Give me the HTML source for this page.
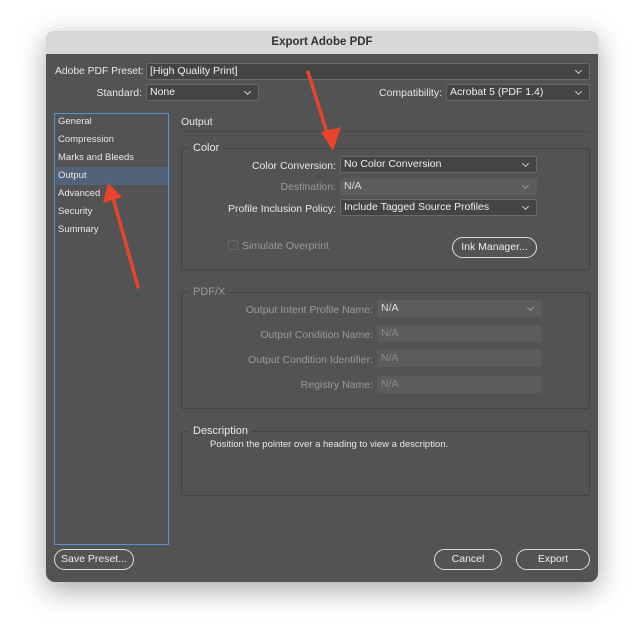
<!DOCTYPE html>
<html><head><meta charset="utf-8"><style>
*{box-sizing:border-box;margin:0;padding:0}
body{width:644px;height:643px;background:#fff;position:relative;overflow:hidden;font-family:"Liberation Sans",sans-serif;color:#e8e8e8}
.a{position:absolute}
#dlg{left:46px;top:31px;width:552px;height:551px;background:#535353;border-radius:9px;box-shadow:0 8px 28px rgba(0,0,0,.35);overflow:hidden}
#tb{left:0;top:0;width:552px;height:23px;background:#d7d7d7;color:#333;font-weight:bold;font-size:11.5px;text-align:center;line-height:23px}
.t{font-size:10.5px;white-space:nowrap;line-height:14px}
.r{text-align:right}
.sel{background:#444;border:1px solid #6a6a6a;border-radius:2px;font-size:10.5px;line-height:15px;padding-left:3px;color:#f0f0f0}
.sel:after{content:"";position:absolute;right:8px;top:4px;width:4px;height:4px;border-right:1px solid #ccc;border-bottom:1px solid #ccc;transform:rotate(45deg)}
.dis{background:#5c5c5c;border-color:#5c5c5c;color:#ddd}
.dis:after{border-color:#999}
.dis2{background:#5c5c5c;border-color:#5c5c5c;color:#8a8a8a}
.dis2:after{display:none}
.dim{color:#9a9a9a}
.box{border:1px solid #444;border-radius:2px}
.lg{background:#535353;padding:0 4px;font-size:11px;line-height:12px}
.btn{border:1px solid #ddd;border-radius:11px;font-size:10.5px;text-align:center;line-height:19px;color:#eee}
.li{left:1px;width:112px;height:18px;font-size:9.5px;line-height:18px;padding-left:2px}
</style></head><body>
<div id="dlg" class="a">
<div id="tb" class="a">Export Adobe PDF</div>
</div>
<div class="a t" style="left:55px;top:65px;font-size:10.3px">Adobe PDF Preset:</div>
<div class="a sel" style="left:146px;top:63px;width:444px;height:17px">[High Quality Print]</div>
<div class="a t r" style="left:60px;top:86px;width:82px">Standard:</div>
<div class="a sel" style="left:146px;top:84px;width:113px;height:17px">None</div>
<div class="a t r" style="left:340px;top:86px;width:102px">Compatibility:</div>
<div class="a sel" style="left:446px;top:84px;width:144px;height:17px">Acrobat 5 (PDF 1.4)</div>

<div class="a" style="left:54px;top:113px;width:115px;height:432px;border:1px solid #5b8fd3">
<div class="a li" style="top:-1px">General</div>
<div class="a li" style="top:17px">Compression</div>
<div class="a li" style="top:35px">Marks and Bleeds</div>
<div class="a li" style="top:53px;background:#526279">Output</div>
<div class="a li" style="top:71px">Advanced</div>
<div class="a li" style="top:89px">Security</div>
<div class="a li" style="top:107px">Summary</div>
</div>

<div class="a t" style="left:181px;top:115px">Output</div>
<div class="a" style="left:181px;top:131px;width:409px;height:1px;background:#474747"></div>

<div class="a box" style="left:181px;top:148px;width:409px;height:122px"></div>
<div class="a lg" style="left:189px;top:142px">Color</div>
<div class="a t r" style="left:200px;top:159px;width:136px">Color Conversion:</div>
<div class="a sel" style="left:340px;top:156px;width:197px;height:17px">No Color Conversion</div>
<div class="a t r dim" style="left:200px;top:180px;width:136px">Destination:</div>
<div class="a sel dis" style="left:340px;top:178px;width:197px;height:17px">N/A</div>
<div class="a t r" style="left:200px;top:202px;width:136px">Profile Inclusion Policy:</div>
<div class="a sel" style="left:340px;top:199px;width:197px;height:17px">Include Tagged Source Profiles</div>
<div class="a" style="left:228px;top:240px;width:10px;height:10px;border:1px solid #666;border-radius:2px"></div>
<div class="a t dim" style="left:242px;top:239px">Simulate Overprint</div>
<div class="a btn" style="left:452px;top:237px;width:85px;height:21px">Ink Manager...</div>

<div class="a box" style="left:181px;top:292px;width:409px;height:117px"></div>
<div class="a lg dim" style="left:189px;top:286px">PDF/X</div>
<div class="a t r dim" style="left:200px;top:303px;width:173px">Output Intent Profile Name:</div>
<div class="a sel dis" style="left:377px;top:300px;width:165px;height:17px">N/A</div>
<div class="a t r dim" style="left:200px;top:328px;width:173px">Output Condition Name:</div>
<div class="a sel dis2" style="left:377px;top:325px;width:165px;height:17px">N/A</div>
<div class="a t r dim" style="left:200px;top:353px;width:173px">Output Condition Identifier:</div>
<div class="a sel dis2" style="left:377px;top:350px;width:165px;height:17px">N/A</div>
<div class="a t r dim" style="left:200px;top:378px;width:173px">Registry Name:</div>
<div class="a sel dis2" style="left:377px;top:376px;width:165px;height:17px">N/A</div>

<div class="a box" style="left:181px;top:431px;width:409px;height:65px"></div>
<div class="a lg" style="left:189px;top:425px">Description</div>
<div class="a t" style="left:210px;top:438px;font-size:9.5px">Position the pointer over a heading to view a description.</div>

<div class="a btn" style="left:54px;top:549px;width:80px;height:21px">Save Preset...</div>
<div class="a btn" style="left:434px;top:549px;width:68px;height:21px">Cancel</div>
<div class="a btn" style="left:516px;top:549px;width:74px;height:21px;border-width:1.5px">Export</div>

<svg class="a" style="left:0;top:0" width="644" height="643">
<g stroke="#e8432b" stroke-width="3.5" fill="#e8432b" stroke-linecap="round">
<line x1="308" y1="72" x2="328" y2="136"/>
<polygon points="321,132 341,127 333,151" stroke="none"/>
<line x1="138" y1="287" x2="113" y2="198"/>
<polygon points="103,203 122,197 108,183" stroke="none"/>
</g></svg>
</body></html>
